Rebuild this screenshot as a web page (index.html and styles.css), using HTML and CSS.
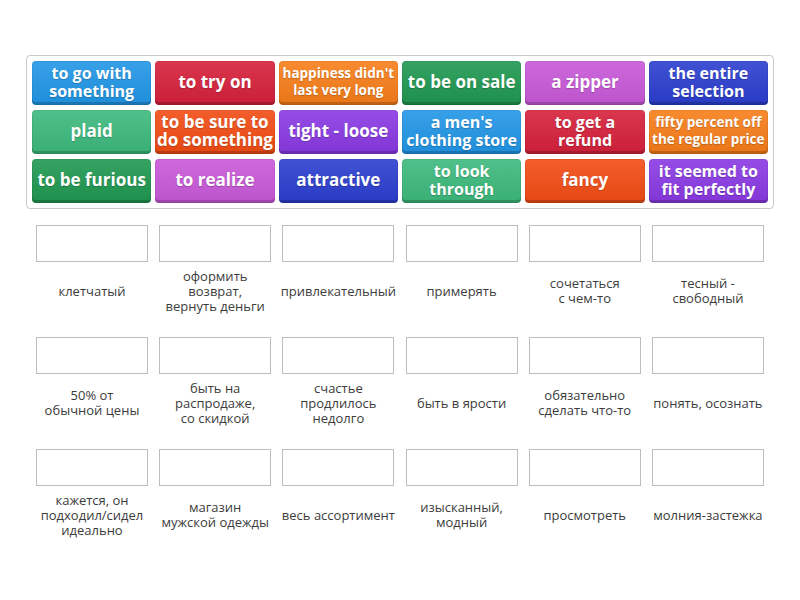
FILE: index.html
```html
<!DOCTYPE html>
<html lang="ru">

<head>
    <meta charset="UTF-8">
    <meta name="viewport" content="width=device-width, initial-scale=1.0">
    <title>Match up</title>
    <link rel="stylesheet" href="styles.css">
</head>

<body>
    <div class="tiles">
        <div class="tile blue two">to go with<br>something</div>
        <div class="tile red">to try on</div>
        <div class="tile orange small">happiness didn't<br>last very long</div>
        <div class="tile green">to be on sale</div>
        <div class="tile pink">a zipper</div>
        <div class="tile navy two">the entire<br>selection</div>

        <div class="tile mint">plaid</div>
        <div class="tile flame">to be sure to<br>do something</div>
        <div class="tile purple">tight - loose</div>
        <div class="tile blue two">a men's<br>clothing store</div>
        <div class="tile red two">to get a<br>refund</div>
        <div class="tile orange small">fifty percent off<br>the regular price</div>

        <div class="tile green">to be furious</div>
        <div class="tile pink">to realize</div>
        <div class="tile navy">attractive</div>
        <div class="tile mint two">to look<br>through</div>
        <div class="tile flame">fancy</div>
        <div class="tile purple two">it seemed to<br>fit perfectly</div>
    </div>

    <div class="targets">
        <div class="cell"><div class="slot"></div><div class="label">клетчатый</div></div>
        <div class="cell"><div class="slot"></div><div class="label">оформить<br>возврат,<br>вернуть деньги</div></div>
        <div class="cell"><div class="slot"></div><div class="label">привлекательный</div></div>
        <div class="cell"><div class="slot"></div><div class="label">примерять</div></div>
        <div class="cell"><div class="slot"></div><div class="label">сочетаться<br>с чем-то</div></div>
        <div class="cell"><div class="slot"></div><div class="label">тесный -<br>свободный</div></div>

        <div class="cell"><div class="slot"></div><div class="label">50% от<br>обычной цены</div></div>
        <div class="cell"><div class="slot"></div><div class="label">быть на<br>распродаже,<br>со скидкой</div></div>
        <div class="cell"><div class="slot"></div><div class="label">счастье<br>продлилось<br>недолго</div></div>
        <div class="cell"><div class="slot"></div><div class="label">быть в ярости</div></div>
        <div class="cell"><div class="slot"></div><div class="label">обязательно<br>сделать что-то</div></div>
        <div class="cell"><div class="slot"></div><div class="label">понять, осознать</div></div>

        <div class="cell"><div class="slot"></div><div class="label">кажется, он<br>подходил/сидел<br>идеально</div></div>
        <div class="cell"><div class="slot"></div><div class="label">магазин<br>мужской одежды</div></div>
        <div class="cell"><div class="slot"></div><div class="label">весь ассортимент</div></div>
        <div class="cell"><div class="slot"></div><div class="label">изысканный,<br>модный</div></div>
        <div class="cell"><div class="slot"></div><div class="label">просмотреть</div></div>
        <div class="cell"><div class="slot"></div><div class="label">молния-застежка</div></div>
    </div>
</body>

</html>
```

FILE: styles.css
```css
body {
    margin: 0;
    background-color: white;
    font-family: "Open Sans", "DejaVu Sans", sans-serif;
}

.tiles {
    display: grid;
    grid-template-columns: repeat(6, 1fr);
    grid-auto-rows: 44px;
    column-gap: 4px;
    row-gap: 5px;
    width: 748px;
    box-sizing: border-box;
    margin: 55px 0 0 26px;
    padding: 5px;
    border: 1px solid #c8c8c8;
    border-radius: 4px;
}

.tile {
    display: flex;
    align-items: center;
    justify-content: center;
    text-align: center;
    color: white;
    font-weight: 700;
    font-size: 17px;
    line-height: 18px;
    border-radius: 4px;
    padding-bottom: 2px;
    box-sizing: border-box;
    white-space: nowrap;
    text-shadow: 0 1px 1px rgba(0, 0, 0, 0.2);
    background-image: linear-gradient(rgba(255, 255, 255, 0.1), rgba(0, 0, 0, 0.06));
    box-shadow: inset 0 -3px 0 rgba(0, 0, 0, 0.18), inset 0 0 0 1px rgba(0, 0, 0, 0.06);
}

.tile.two {
    font-size: 16px;
}

.tile.small {
    font-size: 13.5px;
    line-height: 17px;
}

.blue { background-color: #2196e6; }
.red { background-color: #d6203b; }
.orange { background-color: #f77d19; }
.green { background-color: #1f9850; }
.pink { background-color: #c858d8; }
.navy { background-color: #2b3ecf; }
.mint { background-color: #3cb97c; }
.flame { background-color: #f24c14; }
.purple { background-color: #8a39e3; }

.targets {
    display: grid;
    grid-template-columns: repeat(6, 112px);
    column-gap: 11.2px;
    row-gap: 17px;
    margin: 16px 0 0 36px;
}

.slot {
    height: 37px;
    border: 1px solid #bdbdbd;
    box-sizing: border-box;
}

.label {
    height: 58px;
    display: flex;
    align-items: center;
    justify-content: center;
    text-align: center;
    font-size: 13px;
    line-height: 15px;
    color: #3c3c3c;
    white-space: nowrap;
}
```
